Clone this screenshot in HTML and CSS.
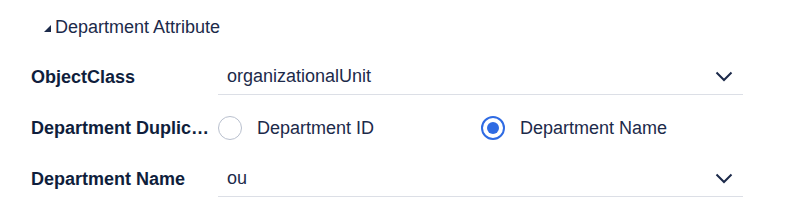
FILE: index.html
```html
<!DOCTYPE html>
<html lang="en">
<head>
    <meta charset="UTF-8">
    <title>Department Attribute</title>
    <link rel="stylesheet" href="styles.css">
</head>
<body>
    <div class="panel">
        <div class="section-title">
            <svg class="caret" width="7" height="7" viewBox="0 0 7 7"><polygon points="7,0 7,7 0,7"/></svg>
            <span>Department Attribute</span>
        </div>

        <div class="form">
            <div class="row">
                <div class="label">ObjectClass</div>
                <div class="field select">
                    <span class="value">organizationalUnit</span>
                    <svg class="chevron" width="18" height="11" viewBox="0 0 18 11"><path d="M1.5 1.5 L9 9 L16.5 1.5"/></svg>
                </div>
            </div>

            <div class="row">
                <div class="label" title="Department Duplicate Check">Department Duplic…</div>
                <div class="field radios">
                    <label class="radio"><span class="dot"></span>Department ID</label>
                    <label class="radio checked"><span class="dot"></span>Department Name</label>
                </div>
            </div>

            <div class="row">
                <div class="label">Department Name</div>
                <div class="field select">
                    <span class="value">ou</span>
                    <svg class="chevron" width="18" height="11" viewBox="0 0 18 11"><path d="M1.5 1.5 L9 9 L16.5 1.5"/></svg>
                </div>
            </div>
        </div>
    </div>
</body>
</html>
```

FILE: styles.css
```css
body {
    margin: 0;
    background: #ffffff;
    font-family: "Liberation Sans", Arial, sans-serif;
    color: #1c2a4a;
}

.panel {
    padding: 15px 0 0 31px;
    width: 712px;
}

.section-title {
    display: flex;
    align-items: center;
    height: 24px;
    padding-left: 13px;
    font-size: 18px;
    color: #1c2a4a;
}

.caret {
    fill: #1c2a4a;
    margin-right: 4px;
    margin-top: 2px;
}

.form {
    margin-top: 20px;
    display: flex;
    flex-direction: column;
    gap: 15px;
}

.row {
    display: grid;
    grid-template-columns: 187px 1fr;
    height: 36px;
}

.label {
    line-height: 36px;
    font-weight: bold;
    font-size: 18px;
    color: #0f1e3c;
    white-space: nowrap;
}

.field {
    display: flex;
    align-items: center;
    font-size: 18px;
}

.select {
    border-bottom: 1px solid #dcdfe6;
    padding: 0 10px 0 9px;
    justify-content: space-between;
}

.chevron {
    fill: none;
    stroke: #1c2a4a;
    stroke-width: 2;
}

.radio {
    display: flex;
    align-items: center;
    width: 263px;
}

.radio .dot {
    box-sizing: border-box;
    width: 24px;
    height: 24px;
    border: 1px solid #b9c0ce;
    border-radius: 50%;
    margin-right: 15px;
    position: relative;
}

.radio.checked .dot {
    border: 2px solid #2f6be3;
}

.radio.checked .dot::after {
    content: "";
    position: absolute;
    left: 4px;
    top: 4px;
    width: 12px;
    height: 12px;
    border-radius: 50%;
    background: #2f6be3;
}
```
